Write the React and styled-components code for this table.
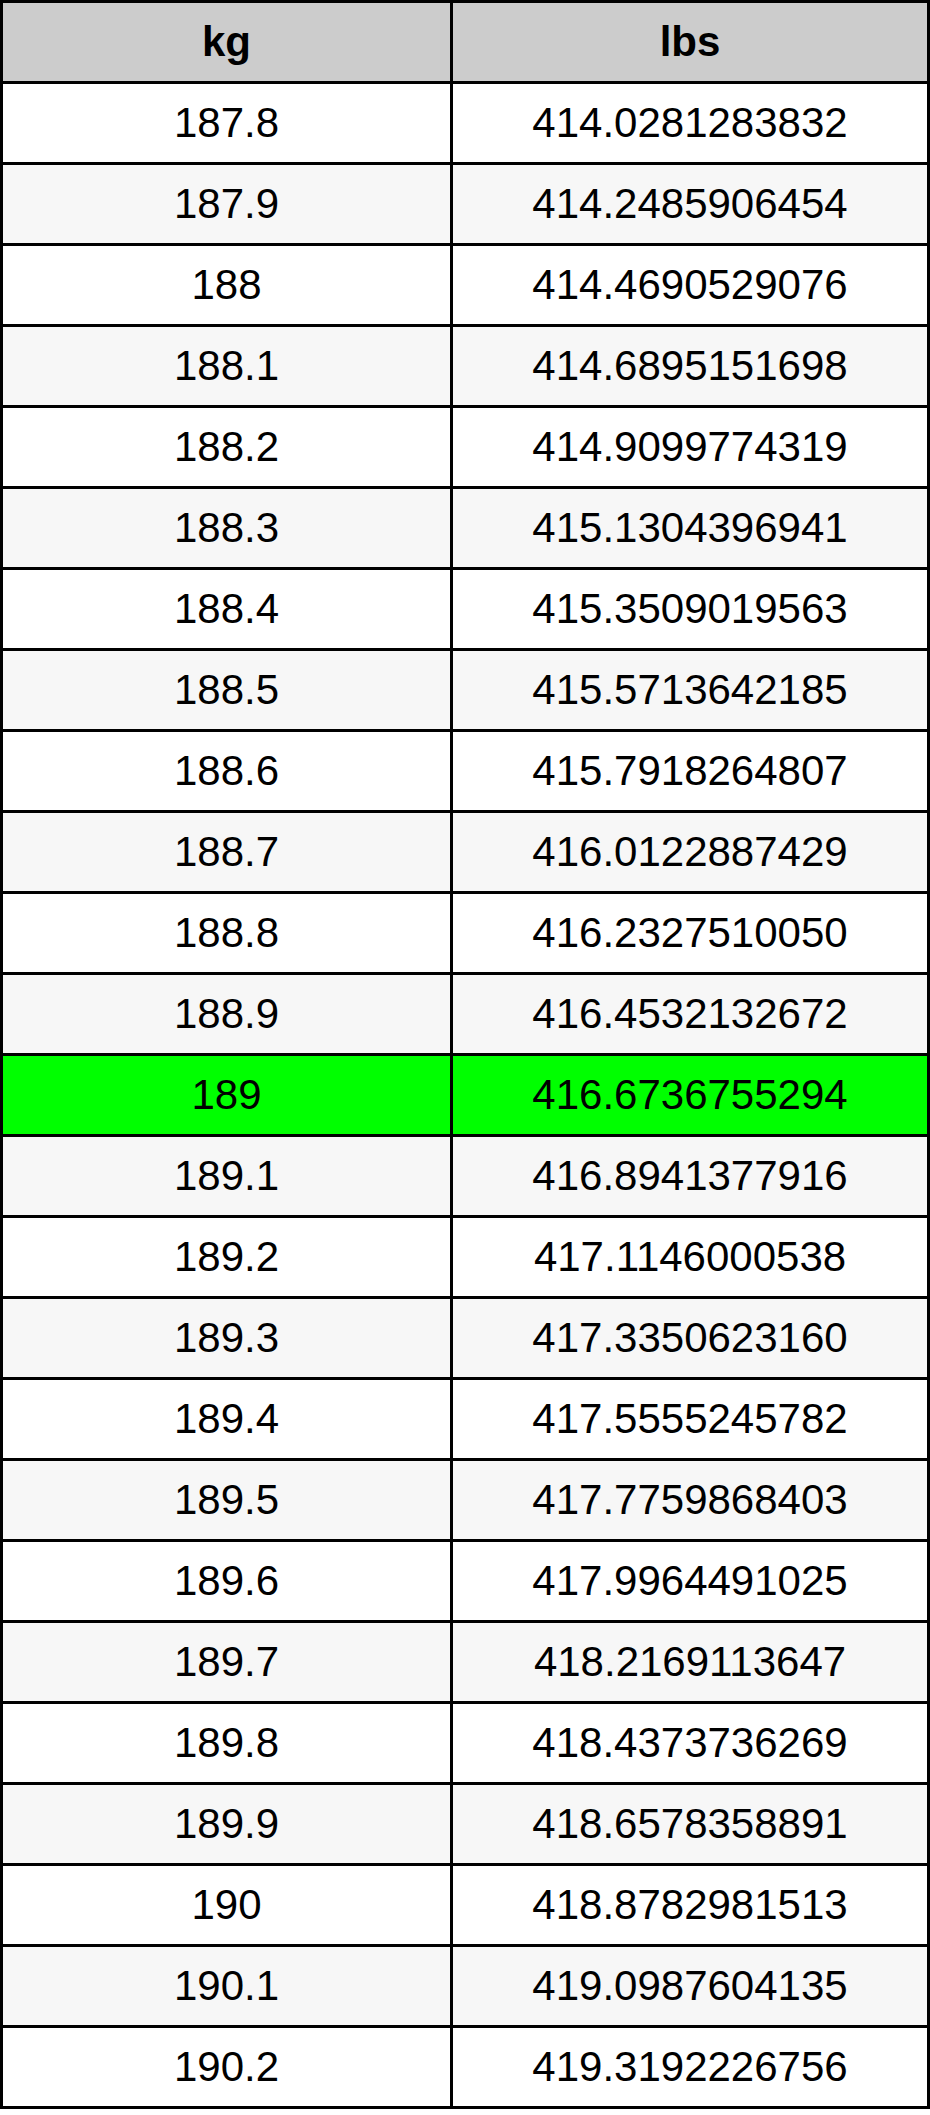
import React from 'react';
import styled, { createGlobalStyle } from 'styled-components';

const rows = [
  ['187.8', '414.0281283832'],
  ['187.9', '414.2485906454'],
  ['188', '414.4690529076'],
  ['188.1', '414.6895151698'],
  ['188.2', '414.9099774319'],
  ['188.3', '415.1304396941'],
  ['188.4', '415.3509019563'],
  ['188.5', '415.5713642185'],
  ['188.6', '415.7918264807'],
  ['188.7', '416.0122887429'],
  ['188.8', '416.2327510050'],
  ['188.9', '416.4532132672'],
  ['189', '416.6736755294'],
  ['189.1', '416.8941377916'],
  ['189.2', '417.1146000538'],
  ['189.3', '417.3350623160'],
  ['189.4', '417.5555245782'],
  ['189.5', '417.7759868403'],
  ['189.6', '417.9964491025'],
  ['189.7', '418.2169113647'],
  ['189.8', '418.4373736269'],
  ['189.9', '418.6578358891'],
  ['190', '418.8782981513'],
  ['190.1', '419.0987604135'],
  ['190.2', '419.3192226756']
];

const GlobalStyle = createGlobalStyle`
  body {
    margin: 0;
    background: #fff;
    font-family: "Liberation Sans", Arial, sans-serif;
  }
`;

const Table = styled.table`
  width: 930px;
  table-layout: fixed;
  border-spacing: 0;
  border-top: 3px solid #000;
  border-left: 3px solid #000;
  font-size: 42px;
  color: #000;
`;

const HeadCell = styled.th`
  width: ${p => p.$w}px;
  padding: 0;
  line-height: 78px;
  background: #cccccc;
  font-weight: bold;
  text-align: center;
  border-right: 3px solid #000;
  border-bottom: 3px solid #000;
`;

const Row = styled.tr`
  background: ${p => (p.$active ? '#00ff00' : p.$odd ? '#f7f7f7' : '#ffffff')};
`;

const Cell = styled.td`
  padding: 0;
  line-height: 78px;
  text-align: center;
  border-right: 3px solid #000;
  border-bottom: 3px solid #000;
`;

export default function App() {
  return (
    <>
      <GlobalStyle />
      <Table>
        <thead>
          <tr>
            <HeadCell $w={447}>kg</HeadCell>
            <HeadCell $w={474}>lbs</HeadCell>
          </tr>
        </thead>
        <tbody>
          {rows.map(([kg, lbs], i) => (
            <Row key={kg} $odd={i % 2 === 1} $active={kg === '189'}>
              <Cell>{kg}</Cell>
              <Cell>{lbs}</Cell>
            </Row>
          ))}
        </tbody>
      </Table>
    </>
  );
}
